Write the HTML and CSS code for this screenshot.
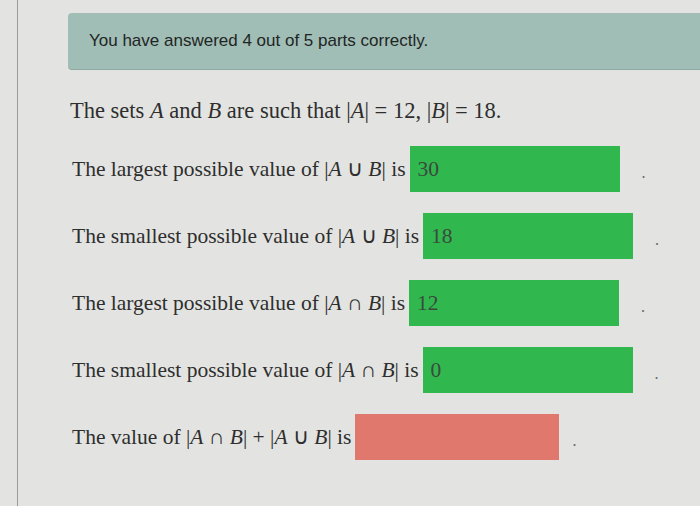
FILE: index.html
```html
<!DOCTYPE html>
<html lang="en">
<head>
  <meta charset="UTF-8">
  <meta name="viewport" content="width=device-width, initial-scale=1.0">
  <title>Sets - Part results</title>
  <link rel="stylesheet" href="styles.css">
</head>
<body>
  <div class="page">
    <div class="banner">You have answered 4 out of 5 parts correctly.</div>

    <p class="intro">The sets <i>A</i> and <i>B</i> are such that |<i>A</i>| = 12, |<i>B</i>| = 18.</p>

    <div class="part">
      <span class="label">The largest possible value of |<i>A</i> &cup; <i>B</i>| is</span>
      <span class="answer correct">30</span>
      <span class="dot">.</span>
    </div>

    <div class="part">
      <span class="label">The smallest possible value of |<i>A</i> &cup; <i>B</i>| is</span>
      <span class="answer correct">18</span>
      <span class="dot">.</span>
    </div>

    <div class="part">
      <span class="label">The largest possible value of |<i>A</i> &cap; <i>B</i>| is</span>
      <span class="answer correct">12</span>
      <span class="dot">.</span>
    </div>

    <div class="part">
      <span class="label">The smallest possible value of |<i>A</i> &cap; <i>B</i>| is</span>
      <span class="answer correct">0</span>
      <span class="dot">.</span>
    </div>

    <div class="part">
      <span class="label">The value of |<i>A</i> &cap; <i>B</i>| + |<i>A</i> &cup; <i>B</i>| is</span>
      <span class="answer wrong"></span>
      <span class="dot near">.</span>
    </div>
  </div>
</body>
</html>
```

FILE: styles.css
```css
body {
  margin: 0;
  background: #e3e4e1;
  font-family: 'Liberation Serif', serif;
  color: #2e2e2e;
}

.page {
  margin-left: 17px;
  min-height: 506px;
  border-left: 1px solid #9a9a98;
  padding: 13px 0 0 50px;
  box-sizing: border-box;
}

.banner {
  height: 56px;
  line-height: 56px;
  padding-left: 21px;
  background: #a0bdb6;
  border-radius: 4px 0 0 4px;
  border-bottom: 1px solid #8fa9a3;
  font-family: 'Liberation Sans', sans-serif;
  font-size: 17px;
  color: #1f2624;
}

.intro {
  margin: 27px 0 0 2px;
  font-size: 22.5px;
  line-height: 28px;
}

.part {
  display: flex;
  align-items: center;
  height: 46px;
  margin: 21px 0 0 4px;
  font-size: 21.5px;
}

.label {
  white-space: nowrap;
}

.answer {
  width: 210px;
  height: 46px;
  line-height: 46px;
  margin-left: 4px;
  padding-left: 8px;
  box-sizing: border-box;
  color: #3a4a3c;
}

.correct {
  background: #30b84f;
}

.wrong {
  width: 204px;
  background: #e0786d;
}

.dot {
  margin: 8px 0 0 22px;
  font-size: 16px;
  color: #666;
}

.dot.near {
  margin-left: 13px;
}
```
